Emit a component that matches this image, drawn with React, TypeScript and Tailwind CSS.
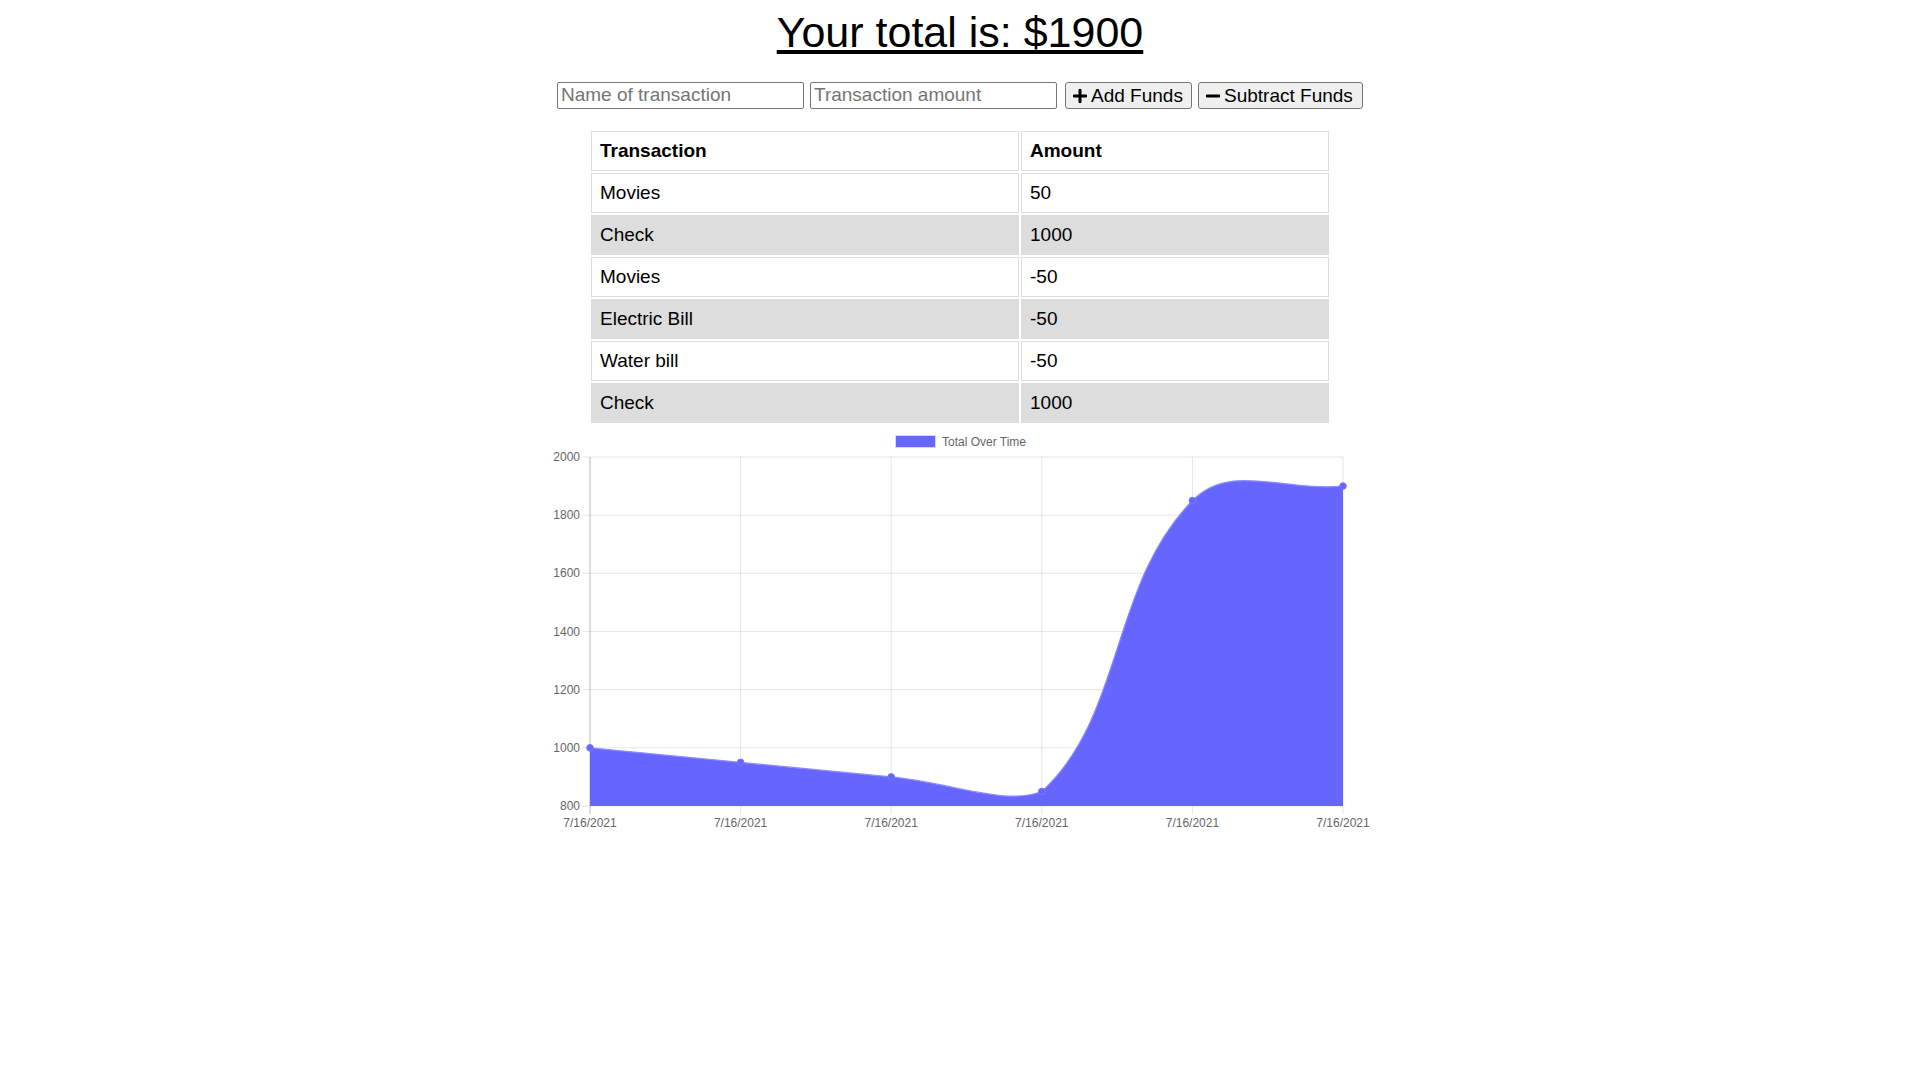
import React from "react";

const values = [1000, 950, 900, 850, 1850, 1900];
const L = 590;
const R = 1343;
const T = 457;
const B = 806;
const DX = (R - L) / 5;
const yOf = (v: number) => B - ((v - 800) * (B - T)) / 1200;

type Pt = { x: number; y: number };

const clamp = (n: number, a: number, b: number) => Math.min(Math.max(n, a), b);

function buildPaths() {
  const P: Pt[] = values.map((v, i) => ({ x: L + i * DX, y: yOf(v) }));
  const cap = (q: Pt) => ({ x: clamp(q.x, L, R), y: clamp(q.y, T, B) });
  const ctrl = P.map((p, i) => {
    const prev = P[i - 1] ?? p;
    const next = P[i + 1] ?? p;
    const d01 = Math.hypot(p.x - prev.x, p.y - prev.y);
    const d12 = Math.hypot(next.x - p.x, next.y - p.y);
    const tot = d01 + d12;
    const fa = 0.4 * (tot ? d01 / tot : 0);
    const fb = 0.4 * (tot ? d12 / tot : 0);
    return {
      prev: cap({ x: p.x - fa * (next.x - prev.x), y: p.y - fa * (next.y - prev.y) }),
      next: cap({ x: p.x + fb * (next.x - prev.x), y: p.y + fb * (next.y - prev.y) }),
    };
  });
  let line = `M${P[0].x} ${P[0].y}`;
  for (let i = 1; i < P.length; i++) {
    const a = ctrl[i - 1].next;
    const b = ctrl[i].prev;
    line += ` C${a.x} ${a.y} ${b.x} ${b.y} ${P[i].x} ${P[i].y}`;
  }
  const area = `${line} L${R} ${B} L${L} ${B} Z`;
  return { P, line, area };
}

const rows = [
  { name: "Movies", amount: "50" },
  { name: "Check", amount: "1000" },
  { name: "Movies", amount: "-50" },
  { name: "Electric Bill", amount: "-50" },
  { name: "Water bill", amount: "-50" },
  { name: "Check", amount: "1000" },
];

const PlusIcon = () => (
  <svg width="14" height="16" viewBox="0 0 448 512" className="shrink-0">
    <path
      fill="#000"
      d="M416 208H272V64c0-17.67-14.330-32-32-32h-32c-17.67 0-32 14.33-32 32v144H32c-17.67 0-32 14.33-32 32v32c0 17.67 14.33 32 32 32h144v144c0 17.67 14.33 32 32 32h32c17.67 0 32-14.33 32-32V304h144c17.67 0 32-14.33 32-32v-32c0-17.67-14.33-32-32-32z"
    />
  </svg>
);

const MinusIcon = () => (
  <svg width="14" height="16" viewBox="0 0 448 512" className="shrink-0">
    <path
      fill="#000"
      d="M416 208H32c-17.67 0-32 14.33-32 32v32c0 17.67 14.33 32 32 32h384c17.67 0 32-14.33 32-32v-32c0-17.67-14.33-32-32-32z"
    />
  </svg>
);

function Chart() {
  const { P, line, area } = buildPaths();
  const ticks = [2000, 1800, 1600, 1400, 1200, 1000, 800];
  return (
    <svg
      width="820"
      height="410"
      viewBox="550 425 820 410"
      className="mx-auto block"
      fontFamily="'Liberation Sans', Arial, sans-serif"
    >
      {ticks.map((t) => (
        <line key={t} x1={582} x2={R} y1={yOf(t)} y2={yOf(t)} stroke="rgba(0,0,0,0.1)" strokeWidth="1" />
      ))}
      {P.map((p, i) => (
        <line key={i} x1={p.x} x2={p.x} y1={T} y2={814} stroke="rgba(0,0,0,0.1)" strokeWidth="1" />
      ))}
      <line x1={L} x2={L} y1={T} y2={814} stroke="rgba(0,0,0,0.18)" strokeWidth="1" />
      <path d={area} fill="#6666ff" />
      <path d={line} fill="none" stroke="#8c8cff" strokeWidth="1.2" />
      {P.map((p, i) => (
        <circle key={i} cx={p.x} cy={p.y} r="3.3" fill="#6666ff" stroke="#7777ff" strokeWidth="1" />
      ))}
      {ticks.map((t) => (
        <text key={t} x={580} y={yOf(t)} textAnchor="end" dominantBaseline="central" fontSize="12" fill="#666">
          {t}
        </text>
      ))}
      {P.map((p, i) => (
        <text key={i} x={p.x} y={823} textAnchor="middle" dominantBaseline="central" fontSize="12" fill="#666">
          7/16/2021
        </text>
      ))}
      <rect x={895.5} y={435.5} width="40" height="12" fill="#6666ff" stroke="#d6d6ff" strokeWidth="1" />
      <text x={942} y={441.5} dominantBaseline="central" fontSize="12" fill="#666">
        Total Over Time
      </text>
    </svg>
  );
}

export default function App() {
  return (
    <main className="w-full min-h-[1080px] bg-white text-black font-['Liberation_Sans',Arial,sans-serif]">
      <h1 className="mt-2 text-center text-[43px] leading-[48px] font-normal underline">Your total is: $1900</h1>

      <div className="mt-[26px] flex justify-center">
        <input
          type="text"
          placeholder="Name of transaction"
          className="w-[247px] h-[27px] px-[3px] border border-[#767676] rounded-[2px] bg-white text-[19px] placeholder:text-[#757575] outline-none"
        />
        <input
          type="text"
          placeholder="Transaction amount"
          className="ml-[6px] w-[247px] h-[27px] px-[3px] border border-[#767676] rounded-[2px] bg-white text-[19px] placeholder:text-[#757575] outline-none"
        />
        <button className="ml-[8px] w-[127px] h-[27px] pl-[7px] flex items-center gap-[4px] border border-[#767676] rounded-[3px] bg-[#efefef] text-[19px] leading-none">
          <PlusIcon />
          <span>Add Funds</span>
        </button>
        <button className="ml-[6px] w-[165px] h-[27px] pl-[7px] flex items-center gap-[4px] border border-[#767676] rounded-[3px] bg-[#efefef] text-[19px] leading-none">
          <MinusIcon />
          <span>Subtract Funds</span>
        </button>
      </div>

      <table className="mt-5 mx-auto w-[742px] table-fixed border-separate border-spacing-[2px]">
        <thead>
          <tr>
            <th className="w-[428px] border border-[#dddddd] p-2 text-left text-[19px] leading-[22px] font-bold">Transaction</th>
            <th className="border border-[#dddddd] p-2 text-left text-[19px] leading-[22px] font-bold">Amount</th>
          </tr>
        </thead>
        <tbody>
          {rows.map((r, i) => (
            <tr key={i} className={i % 2 === 1 ? "bg-[#dddddd]" : "bg-white"}>
              <td className="border border-[#dddddd] p-2 text-[19px] leading-[22px]">{r.name}</td>
              <td className="border border-[#dddddd] p-2 text-[19px] leading-[22px]">{r.amount}</td>
            </tr>
          ))}
        </tbody>
      </table>

      <Chart />
    </main>
  );
}
